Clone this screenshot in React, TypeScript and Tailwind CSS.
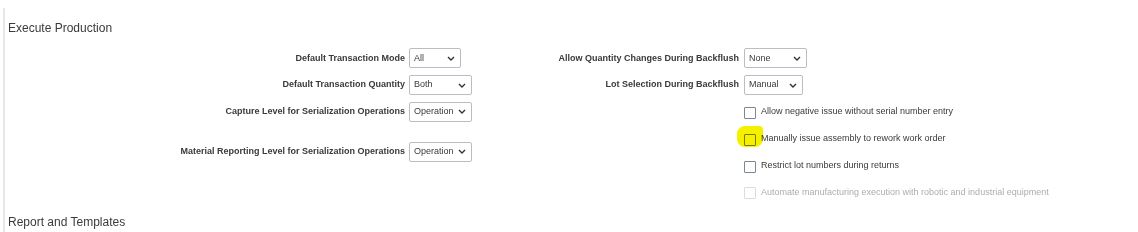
import React from "react";

const font = { fontFamily: '"Liberation Sans", Arial, sans-serif' };

function Chevron() {
  return (
    <svg width="8" height="5" viewBox="0 0 8 5" className="shrink-0">
      <path d="M1 1 L4 4 L7 1" fill="none" stroke="#333" strokeWidth="1.4" />
    </svg>
  );
}

function Select({ value, width }: { value: string; width: string }) {
  return (
    <div
      className={`flex h-[20px] items-center justify-between gap-[3px] rounded-[2px] border border-[#b9bec4] bg-white pl-[4px] pr-[5px] text-[9px] text-[#3a3a3a] ${width}`}
    >
      <span>{value}</span>
      <Chevron />
    </div>
  );
}

function Field({ label, children, className = "" }: { label: string; children: React.ReactNode; className?: string }) {
  return (
    <>
      <div className={`flex h-[26.8px] items-center justify-end text-[9px] font-bold text-[#3a3a3a] ${className}`}>
        {label}
      </div>
      <div className={`flex h-[26.8px] items-center ${className}`}>{children}</div>
    </>
  );
}

function Check({ label, disabled, highlight }: { label: string; disabled?: boolean; highlight?: boolean }) {
  return (
    <div className="col-start-2 flex h-[26.8px] items-center gap-[5px]">
      <div className="relative mt-[2px]">
        <div
          className={`h-[12px] w-[12px] rounded-[1px] border bg-white ${
            disabled ? "border-[#dcdcdc]" : "border-[#7d8790]"
          }`}
        />
        {highlight && (
          <div className="absolute left-[-7px] top-[-8px] h-[21px] w-[26px] rounded-[8px] rounded-tr-[4px] bg-[#f4f000] mix-blend-multiply" />
        )}
      </div>
      <span className={`whitespace-nowrap text-[9px] ${disabled ? "text-[#adadad]" : "text-[#3a3a3a]"}`}>{label}</span>
    </div>
  );
}

export default function App() {
  return (
    <div className="h-[232px] w-[1138px] overflow-hidden bg-white pl-[3px] pt-[8px]" style={font}>
      <div className="h-[240px] border-l-2 border-[#e6e6e6] pl-[3px] pt-[13px]">
        <h2 className="text-[12px] leading-[14px] text-[#3a3a3a]">Execute Production</h2>

        <div className="mt-[10px] flex">
          <div className="grid grid-cols-[397px_auto] gap-x-[4px] self-start">
            <Field label="Default Transaction Mode">
              <Select value="All" width="w-[52px]" />
            </Field>
            <Field label="Default Transaction Quantity">
              <Select value="Both" width="w-[63px]" />
            </Field>
            <Field label="Capture Level for Serialization Operations">
              <Select value="Operation" width="w-[63px]" />
            </Field>
            <Field label="Material Reporting Level for Serialization Operations" className="mt-[13px]">
              <Select value="Operation" width="w-[63px]" />
            </Field>
          </div>

          <div className="grid grid-cols-[267px_auto] gap-x-[5px]">
            <Field label="Allow Quantity Changes During Backflush">
              <Select value="None" width="w-[63px]" />
            </Field>
            <Field label="Lot Selection During Backflush">
              <Select value="Manual" width="w-[59px]" />
            </Field>
            <Check label="Allow negative issue without serial number entry" />
            <Check label="Manually issue assembly to rework work order" highlight />
            <Check label="Restrict lot numbers during returns" />
            <Check label="Automate manufacturing execution with robotic and industrial equipment" disabled />
          </div>
        </div>

        <h2 className="mt-[9px] text-[12px] leading-[14px] text-[#3a3a3a]">Report and Templates</h2>
      </div>
    </div>
  );
}
